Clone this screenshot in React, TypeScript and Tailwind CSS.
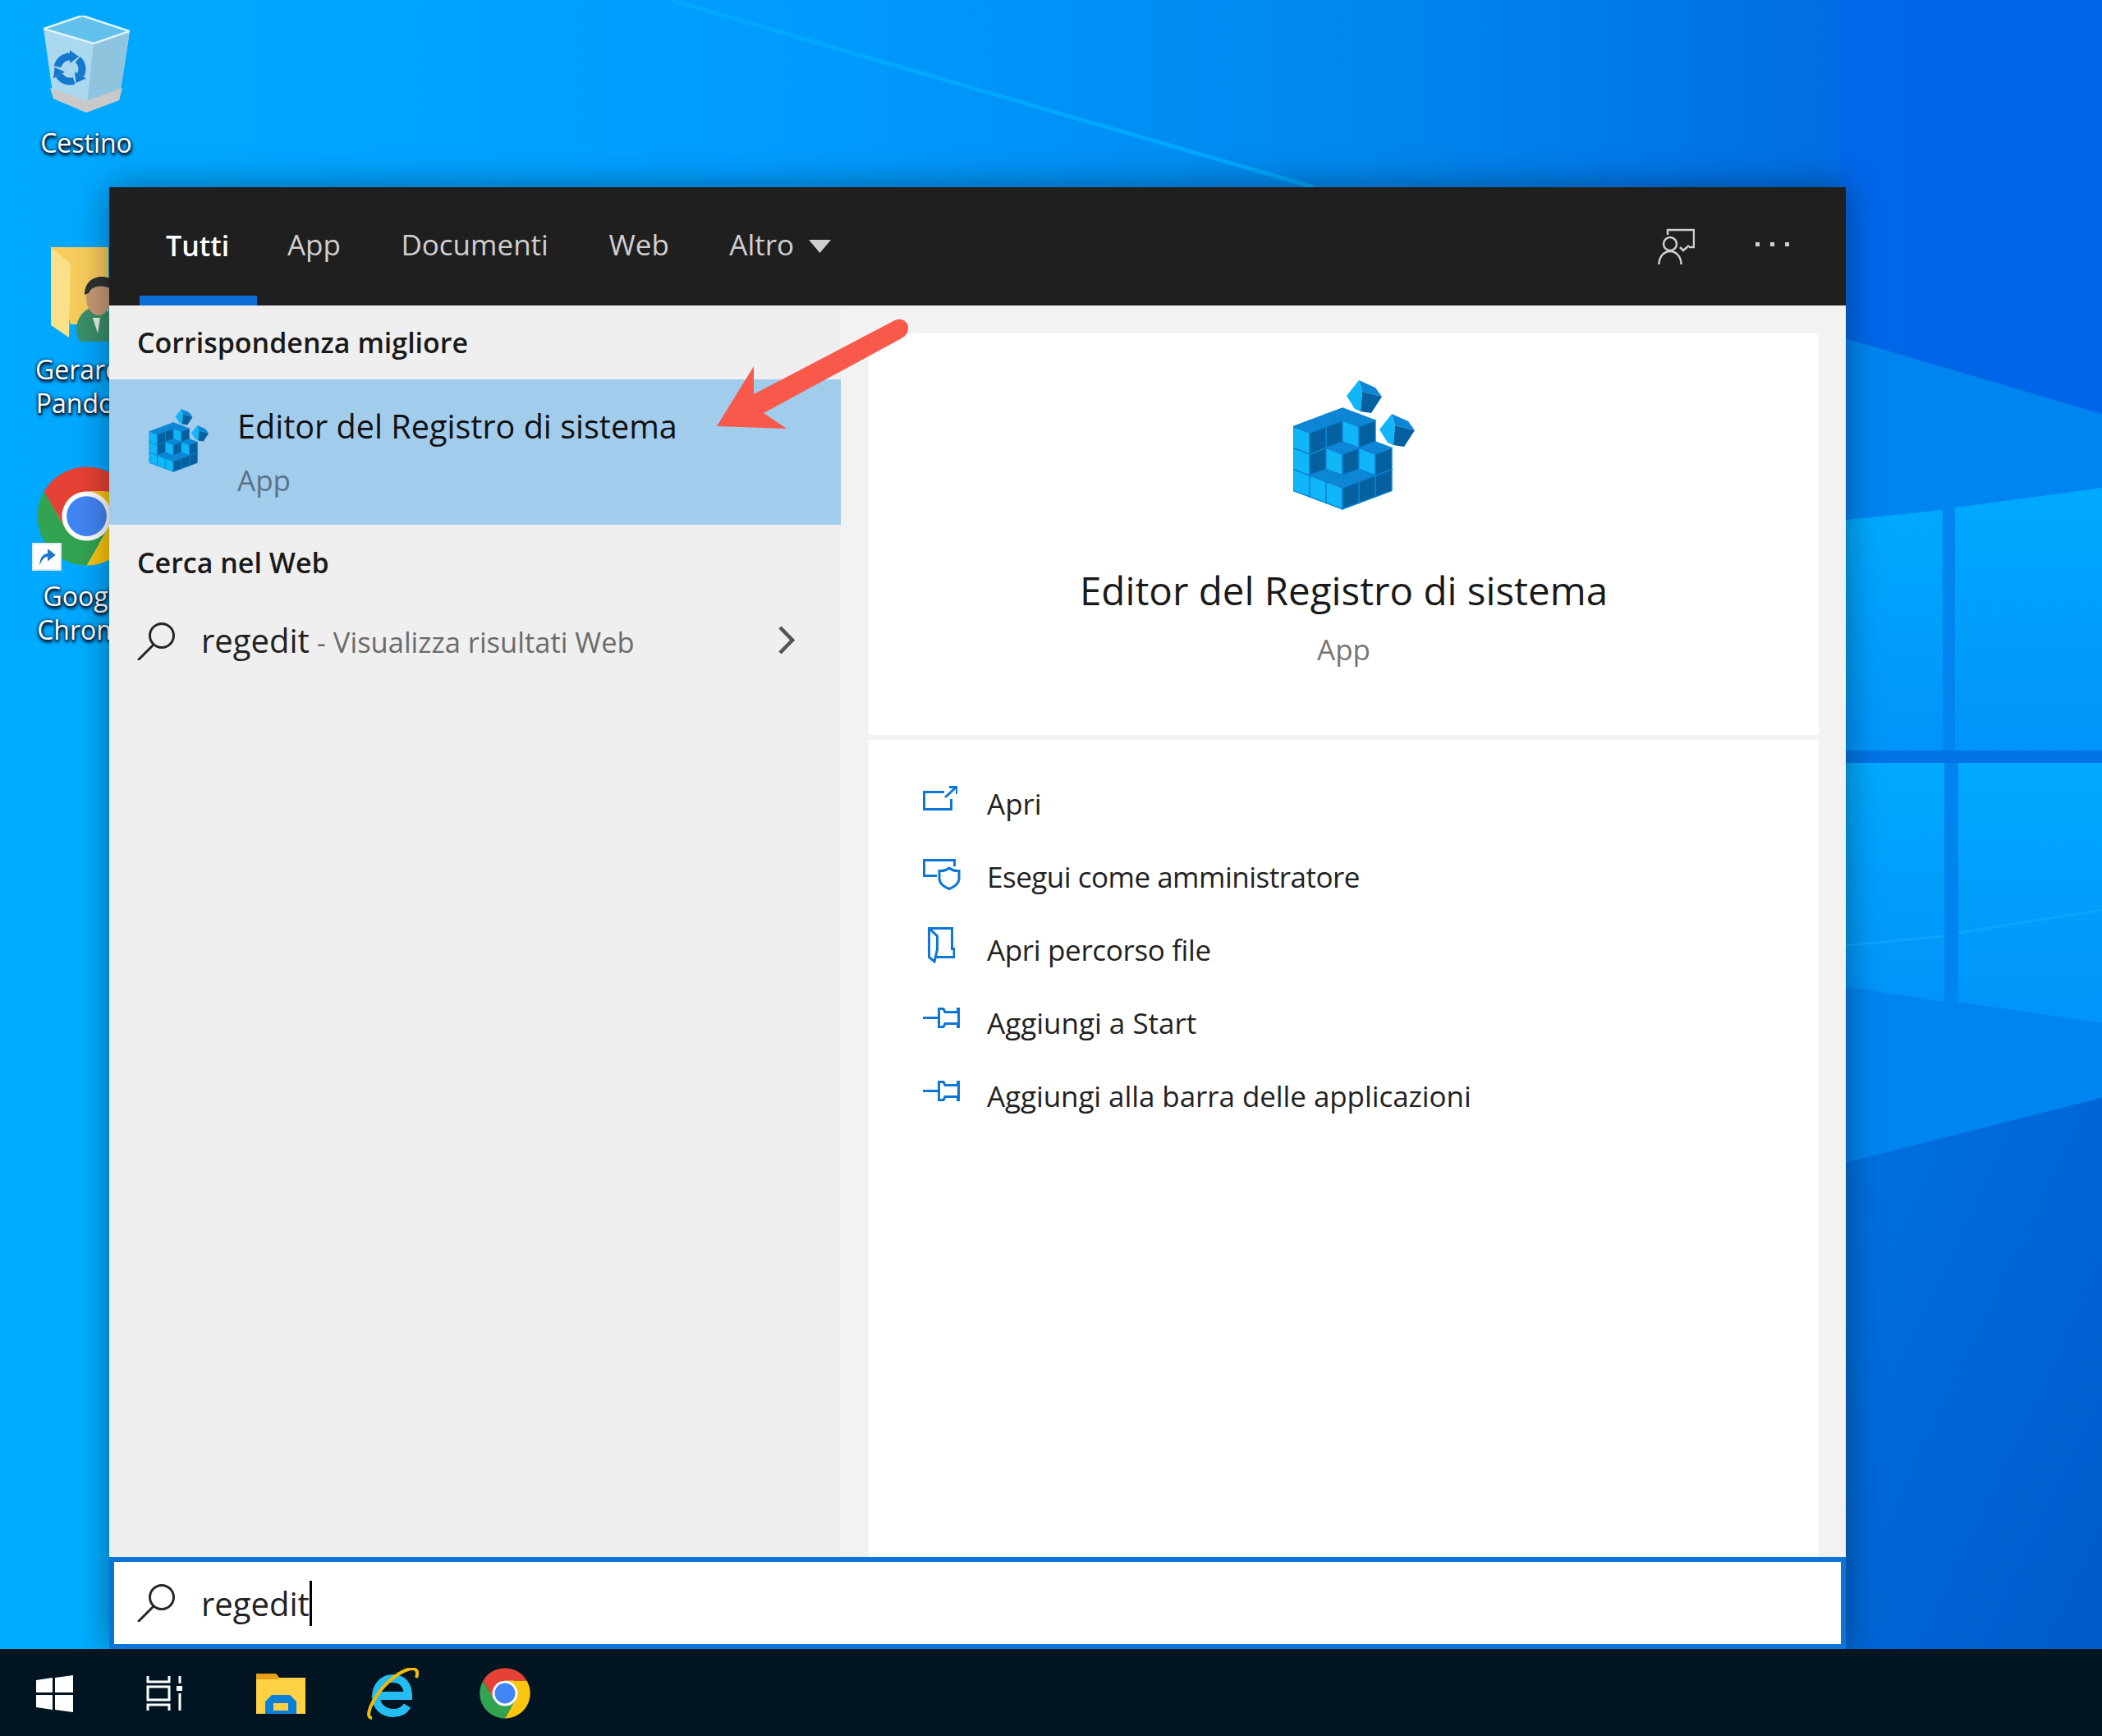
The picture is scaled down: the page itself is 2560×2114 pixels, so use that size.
const TABS = ["App", "Documenti", "Web"];

const ACTIONS = [
  { label: "Apri", icon: "open", textClass: "" },
  { label: "Esegui come amministratore", icon: "shield", textClass: "tracking-[-0.5px]" },
  { label: "Apri percorso file", icon: "folder", textClass: "tracking-[-0.35px]" },
  { label: "Aggiungi a Start", icon: "pin", textClass: "" },
  { label: "Aggiungi alla barra delle applicazioni", icon: "pin", textClass: "tracking-[-0.08px]" },
];

// grid position, height of the stack; back to front
const STACKS = [
  [2, 2, 3],
  [2, 1, 3],
  [1, 2, 3],
  [2, 0, 3],
  [1, 1, 2],
  [0, 2, 2],
  [1, 0, 1],
  [0, 1, 1],
  [0, 0, 1],
];

function Cube({ x, y }: { x: number; y: number }) {
  const w = 20;
  const h = 7.5;
  const H = 26;
  return (
    <g stroke="#0c84d2" strokeWidth="1.4">
      <polygon points={`${x},${y} ${x - w},${y - h} ${x},${y - 2 * h} ${x + w},${y - h}`} fill="#0d86d6" />
      <polygon points={`${x},${y} ${x - w},${y - h} ${x - w},${y - h + H} ${x},${y + H}`} fill="#10b6f8" />
      <polygon points={`${x},${y} ${x + w},${y - h} ${x + w},${y - h + H} ${x},${y + H}`} fill="#05609f" />
    </g>
  );
}

function FloatingCube() {
  return (
    <g>
      <polygon points="80,0 100,9 108,20 84,14" fill="#0d86d6" />
      <polygon points="65,19 80,0 84,14 82,38 75,35" fill="#10b6f8" />
      <polygon points="84,14 108,20 95,40 82,38" fill="#05609f" />
    </g>
  );
}

function RegistryIcon({ className }: { className: string }) {
  const cubes: { x: number; y: number; key: string }[] = [];
  STACKS.forEach(([i, j, n]) => {
    for (let k = 0; k < n; k++) {
      cubes.push({
        x: 60 + (j - i) * 20,
        y: 131 - (i + j) * 7.5 - k * 26,
        key: `${i}-${j}-${k}`,
      });
    }
  });
  return (
    <svg viewBox="0 0 148 158" className={className}>
      {cubes.map((c) => (
        <Cube key={c.key} x={c.x} y={c.y} />
      ))}
      <FloatingCube />
      <g transform="translate(40 41)">
        <FloatingCube />
      </g>
    </svg>
  );
}

function SearchIcon() {
  return (
    <svg viewBox="0 0 46 46" className="h-[46px] w-[46px] shrink-0" fill="none" stroke="#262626" strokeWidth="3">
      <circle cx="30" cy="16" r="14.5" />
      <path d="M20 27 2 45" strokeLinecap="round" />
    </svg>
  );
}

function ActionIcon({ type }: { type: string }) {
  const common = { fill: "none", stroke: "#0e76d6", strokeWidth: 3 };
  if (type === "open") {
    return (
      <svg viewBox="0 0 42 30" className="mb-[16px] h-[30px] w-[42px]" {...common}>
        <path d="M26 7.5H1.5V28.500H34.500V16" />
        <path d="M27 14 40 2" />
        <path d="M32 1.500H41.500V10" />
      </svg>
    );
  }
  if (type === "shield") {
    return (
      <svg viewBox="0 0 46 38" className="mb-[8px] h-[38px] w-[46px]" {...common}>
        <path d="M17 20.500H1.500V1.500H38.500V9" />
        <path d="M32 11C28 14 24 15 20 14.500V24C20 30 26 34 32 36.500C38 34 44 30 44 24V14.500C40 15 36 14 32 11Z" />
      </svg>
    );
  }
  if (type === "folder") {
    return (
      <svg viewBox="0 0 33 44" className="mb-[14px] ml-[6px] h-[44px] w-[33px]" {...common}>
        <path d="M1.500 1.500H29.500V26.500H32V36.500H10" />
        <path d="M1.500 1.500 11.500 11V27L8 42 1.500 36.500Z" />
      </svg>
    );
  }
  return (
    <svg viewBox="0 0 45 25" className="mb-[15px] h-[25px] w-[45px]" {...common}>
      <path d="M0 12.500H19" />
      <path d="M19.500 1.500H25L27 5.500H42.500V1H43.500V24H42.500V19.500H27L25 23.500H19.500Z" />
    </svg>
  );
}

function ChromeLogo({ className }: { className: string }) {
  return (
    <svg viewBox="0 0 100 100" className={className}>
      <circle cx="50" cy="50" r="30" fill="#fff" />
      <path d="M8.400 26A48 48 0 0 1 91.600 26H50A24 24 0 0 0 29.200 62Z" fill="#e64135" />
      <path d="M8.400 26 29.200 62A24 24 0 0 0 70.800 62L50 98A48 48 0 0 1 8.400 26Z" fill="#32a350" />
      <path d="M91.600 26H50A24 24 0 0 1 70.800 62L50 98A48 48 0 0 0 91.600 26Z" fill="#fbc60f" />
      <circle cx="50" cy="50" r="19.500" fill="#4285f4" />
    </svg>
  );
}

function Wallpaper() {
  return (
    <svg viewBox="0 0 2560 2008" className="absolute inset-0 h-full w-full">
      <defs>
        <linearGradient id="base" x1="0" x2="1" y1="0" y2="0">
          <stop offset="0" stopColor="#00aaff" />
          <stop offset="0.35" stopColor="#009dff" />
          <stop offset="0.65" stopColor="#0087ee" />
          <stop offset="0.85" stopColor="#0070e4" />
          <stop offset="1" stopColor="#005edc" />
        </linearGradient>
        <linearGradient id="pane" x1="0" x2="0" y1="0" y2="1">
          <stop offset="0" stopColor="#00a9ff" />
          <stop offset="1" stopColor="#0094f8" />
        </linearGradient>
        <linearGradient id="floor" x1="0" x2="1" y1="0" y2="1">
          <stop offset="0" stopColor="#0072e0" />
          <stop offset="1" stopColor="#005acb" />
        </linearGradient>
      </defs>
      <rect width="2560" height="2008" fill="url(#base)" />
      <rect x="0" y="780" width="400" height="1228" fill="#00adff" />
      <polygon points="2240,0 2560,0 2560,504 2240,410" fill="#0066ea" opacity="0.85" />
      <path d="M816 0 1600 228" stroke="#00a8ff" strokeWidth="5" />
      <polygon points="2240,410 2560,504 2560,1337 2240,1418" fill="#0084f0" />
      <rect x="2240" y="914" width="320" height="15" fill="#0074e6" />
      <polygon points="2240,634 2366,621 2366,914 2240,914" fill="url(#pane)" />
      <polygon points="2381,618 2560,594 2560,914 2381,914" fill="url(#pane)" />
      <polygon points="2240,929 2368,929 2368,1220 2240,1200" fill="url(#pane)" />
      <polygon points="2385,929 2560,929 2560,1246 2385,1220" fill="url(#pane)" />
      <path d="M2240 1152 2366 1140M2385 1136 2560 1108" stroke="#0ca4ff" strokeWidth="3" />
      <polygon points="2240,1418 2560,1337 2560,2008 2240,2008" fill="url(#floor)" />
    </svg>
  );
}

function DesktopLabel({ lines }: { lines: string[] }) {
  return (
    <div className="w-[130px] text-center text-[32px] leading-[41px] text-white [text-shadow:0_2px_3px_#001a33,0_0_4px_#001a33,1px_3px_4px_#001a33]">
      {lines.map((line) => (
        <div key={line}>{line}</div>
      ))}
    </div>
  );
}

function RecycleArm() {
  return (
    <g>
      <path d="M17.200 62.400A15 15 0 0 1 32 50" fill="none" stroke="#1478cc" strokeWidth="9" />
      <polygon points="32,42 32,58 43,50" fill="#1478cc" />
    </g>
  );
}

function DesktopIcons() {
  return (
    <>
      <div className="absolute left-[40px] top-[19px] flex flex-col items-center">
        <svg viewBox="0 0 105 118" className="h-[118px] w-[105px]">
          <polygon points="0,16 12,101 52,118 92,103 105,19 61,34" fill="#a9d8ef" />
          <polygon points="61,34 105,19 92,103 52,118" fill="#8fc4df" />
          <polygon points="8,88 52,104 96,88 92,103 52,118 12,101" fill="#c9c9c9" />
          <polygon points="0,16 47,0 105,19 61,34" fill="#62c1ea" stroke="#dff3fb" strokeWidth="2.500" />
          <RecycleArm />
          <g transform="rotate(120 32 65)">
            <RecycleArm />
          </g>
          <g transform="rotate(240 32 65)">
            <RecycleArm />
          </g>
        </svg>
        <div className="mt-[16px]">
          <DesktopLabel lines={["Cestino"]} />
        </div>
      </div>
      <div className="absolute left-[40px] top-[301px] flex flex-col items-start">
        <svg viewBox="0 0 110 115" className="ml-[22px] h-[115px] w-[110px]">
          <polygon points="0,0 70,0 70,94 24,94" fill="#f8cc5d" />
          <polygon points="0,0 24,20 22,110 0,95" fill="#fbe08a" />
          <ellipse cx="55" cy="100" rx="24" ry="27" fill="#3b8f6b" />
          <polygon points="51,86 60,86 57,105" fill="#e8efe9" />
          <ellipse cx="58" cy="62" rx="15" ry="21" fill="#c89b78" />
          <path d="M41 58C41 42 52 36 62 36C68 36 72 38 72 38V50C64 46 50 46 46 56Z" fill="#2e3131" />
        </svg>
        <div className="mt-[13px]">
          <DesktopLabel lines={["Gerardo", "Pandolfi"]} />
        </div>
      </div>
      <div className="absolute left-[43px] top-[566px] flex flex-col items-start">
        <ChromeLogo className="h-[125px] w-[125px]" />
        <div className="absolute left-[-4px] top-[95px] flex h-[34px] w-[36px] items-center justify-center border-2 border-[#dfe8ee] bg-white">
          <svg viewBox="0 0 24 24" className="h-[26px] w-[26px]" fill="#1a78c8">
            <path d="M4 22C4 12 8 9 13 8V3L22 10 13 17V12C9 12 6 16 4 22Z" />
          </svg>
        </div>
        <div className="-ml-[3px] mt-[14px]">
          <DesktopLabel lines={["Google", "Chrome"]} />
        </div>
      </div>
    </>
  );
}

function Header() {
  return (
    <header className="flex h-[144px] shrink-0 items-stretch bg-[#1f1f1f] pl-[37px] text-[35px] text-[#cfcfcf]">
      <div className="flex items-center border-b-[12px] border-[#0b6fd6] pl-[32px] pr-[34px] pt-[10px] text-[34px] font-semibold text-white">
        Tutti
      </div>
      {TABS.map((tab) => (
        <div key={tab} className="flex items-center px-[36.750px] pb-[3px]">
          {tab}
        </div>
      ))}
      <div className="flex items-center pb-[3px] pl-[36.750px]">
        Altro
        <svg viewBox="0 0 27 16" className="ml-[18px] mt-[2px] h-[16px] w-[27px]" fill="#cfcfcf">
          <polygon points="0,0 27,0 13.500,16" />
        </svg>
      </div>
      <div className="ml-auto flex items-center pr-[69px]">
        <svg viewBox="0 0 45 44" className="h-[44px] w-[45px]" fill="none" stroke="#cfcfcf" strokeWidth="2.500">
          <path d="M12 8V2H44V23H38" />
          <circle cx="15" cy="19" r="8" />
          <path d="M1.500 44C1.500 34 8 28 15 28C22 28 28.500 34 28.500 44" />
          <path d="M27 23 31 27 38 21" />
        </svg>
        <div className="mb-[5px] ml-[74px] flex gap-[13px]">
          <span className="h-[5px] w-[5px] bg-[#cfcfcf]" />
          <span className="h-[5px] w-[5px] bg-[#cfcfcf]" />
          <span className="h-[5px] w-[5px] bg-[#cfcfcf]" />
        </div>
      </div>
    </header>
  );
}

function ResultsPane() {
  return (
    <section className="w-[891px] shrink-0 bg-[#efefef] text-[#1a1a1a]">
      <h2 className="flex h-[90px] items-center pl-[34px] text-[34px] font-semibold">Corrispondenza migliore</h2>
      <div className="flex h-[177px] items-start bg-[#a2ccec] pl-[47px]">
        <RegistryIcon className="mt-[36px] h-[77px] w-[76px]" />
        <div className="ml-[33px] mt-[31px]">
          <div className="text-[39.600px] leading-[52px] text-[#111]">Editor del Registro di sistema</div>
          <div className="mt-[15px] text-[35px] leading-[50px] text-[#5a7388]">App</div>
        </div>
      </div>
      <h2 className="flex h-[94px] items-center pb-[2px] pl-[34px] text-[34px] font-semibold">Cerca nel Web</h2>
      <div className="flex h-[96px] items-center pl-[34px] pr-[56px]">
        <SearchIcon />
        <span className="mb-[2px] ml-[32px] text-[40px] text-[#222]">
          regedit<span className="text-[34.500px] text-[#6b6b6b]"> - Visualizza risultati Web</span>
        </span>
        <svg viewBox="0 0 21 35" className="mb-[3px] ml-auto h-[35px] w-[21px]" fill="none" stroke="#555" strokeWidth="4.500">
          <path d="M3 2 18 17.500 3 33" />
        </svg>
      </div>
    </section>
  );
}

function DetailPane() {
  return (
    <section className="flex flex-1 flex-col pl-[34px] pr-[33px] pt-[34px]">
      <div className="flex h-[489px] shrink-0 flex-col items-center bg-white">
        <RegistryIcon className="ml-[25px] mt-[57px] h-[158px] w-[148px]" />
        <div className="mt-[66px] text-[47.500px] leading-[64px] text-[#1a1a1a]">Editor del Registro di sistema</div>
        <div className="mt-[15px] text-[35px] leading-[50px] text-[#767676]">App</div>
      </div>
      <div className="mt-[6px] flex flex-1 flex-col bg-white pt-[34px]">
        {ACTIONS.map((action) => (
          <div key={action.label} className="flex h-[89px] items-center pl-[66px] text-[#222]">
            <div className="flex w-[78px] items-start justify-start">
              <ActionIcon type={action.icon} />
            </div>
            <span className={`text-[35px] ${action.textClass}`}>{action.label}</span>
          </div>
        ))}
      </div>
    </section>
  );
}

function SearchBox() {
  return (
    <div className="flex h-[112px] shrink-0 items-center border-[6px] border-[#0b74d8] bg-white pl-[28px]">
      <SearchIcon />
      <span className="ml-[32px] pt-[2px] text-[40px] text-[#222]">regedit</span>
      <span className="h-[55px] w-[3px] bg-black" />
    </div>
  );
}

function Taskbar() {
  return (
    <footer className="flex h-[106px] shrink-0 items-center bg-[#001421] pl-[44px] pt-[2px]">
      <svg viewBox="0 0 45 45" className="h-[45px] w-[45px]" fill="#fff">
        <polygon points="0,6 20,3 20,21 0,21" />
        <polygon points="23,3 45,0 45,21 23,21" />
        <polygon points="0,24 20,24 20,42 0,39" />
        <polygon points="23,24 45,24 45,45 23,42" />
      </svg>
      <svg viewBox="0 0 44 42" className="ml-[89px] h-[42px] w-[44px]" fill="none" stroke="#fff" strokeWidth="3">
        <path d="M2 0V7H28V0M2 42V35H28V42" />
        <rect x="2" y="13" width="26" height="16" />
        <path d="M41 0V9M41 21V42" />
        <rect x="37" y="12" width="7" height="6" fill="#fff" stroke="none" />
      </svg>
      <svg viewBox="0 0 60 49" className="ml-[90px] h-[49px] w-[60px]">
        <polygon points="0,0 24,0 28,5 60,5 60,49 0,49" fill="#ffd145" />
        <polygon points="0,0 24,0 28,7 0,7" fill="#e8a118" />
        <polygon points="11,34 19,26 41,26 49,34 49,49 11,49" fill="#0a80d8" />
        <rect x="21" y="36" width="18" height="9" fill="#ffd145" />
      </svg>
      <svg viewBox="0 0 63 63" className="ml-[75px] h-[63px] w-[63px]" fill="none">
        <path d="M16 34H50C50 20 42 13 32 13C19 13 11 23 11 35C11 47 20 55 32 55C40 55 46 51 49 46" stroke="#25bdf0" strokeWidth="10" />
        <path d="M6 61C1 61 0 54 8 40C18 22 36 6 50 2C60 -1 63 4 60 12" stroke="#f0b90b" strokeWidth="4" />
      </svg>
      <ChromeLogo className="ml-[73px] h-[64px] w-[64px]" />
    </footer>
  );
}

export default function App() {
  return (
    <div className="flex h-[2114px] w-[2560px] flex-col overflow-hidden font-['Open_Sans',sans-serif]">
      <main className="relative h-[2008px] shrink-0 overflow-hidden">
        <Wallpaper />
        <DesktopIcons />
        <div className="absolute left-[133px] top-[228px] flex h-[1780px] w-[2115px] flex-col shadow-[0_0_40px_rgba(0,0,0,0.4)]">
          <Header />
          <div className="flex min-h-0 flex-1 bg-[#f2f2f2]">
            <ResultsPane />
            <DetailPane />
          </div>
          <SearchBox />
        </div>
        <svg viewBox="870 385 240 140" className="absolute left-[870px] top-[385px] h-[140px] w-[240px]">
          <path
            d="M873 519 918 446V480L1088 391C1098 385 1106 392 1106 399C1106 405 1103 409 1098 412L930 503 958 522Z"
            fill="#f9594a"
          />
        </svg>
      </main>
      <Taskbar />
    </div>
  );
}
